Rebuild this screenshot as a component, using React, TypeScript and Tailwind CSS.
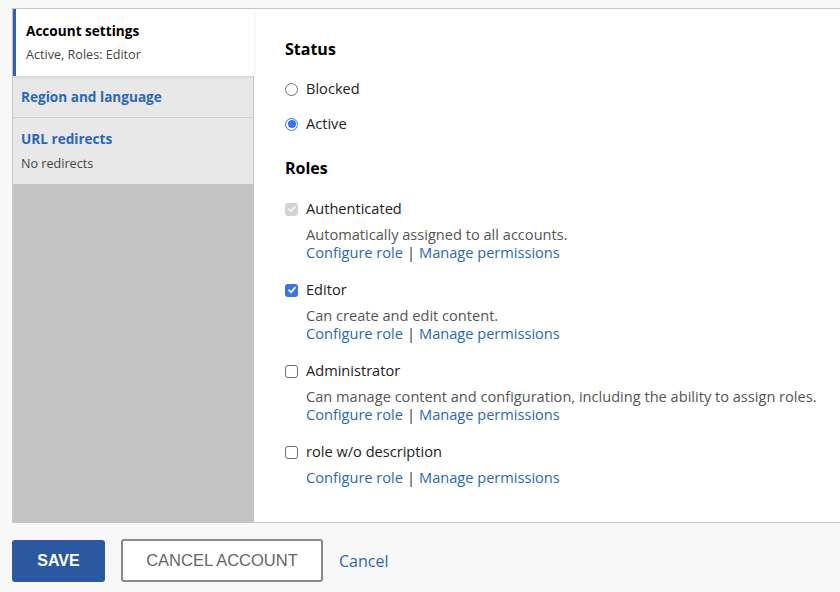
import React from "react";

const linkCls = "text-[#2a67b8]";

function Radio({ checked }: { checked?: boolean }) {
    return checked ? (
        <span className="w-[13px] h-[13px] rounded-full border border-[#3a74ea] bg-white flex items-center justify-center shrink-0">
            <span className="w-[8px] h-[8px] rounded-full bg-[#3a74ea]" />
        </span>
    ) : (
        <span className="w-[13px] h-[13px] rounded-full border border-[#707070] bg-white shrink-0" />
    );
}

function Checkbox({ state }: { state: "on" | "off" | "disabled" }) {
    if (state === "off") {
        return <span className="w-[13px] h-[13px] rounded-[3px] border border-[#707070] bg-white shrink-0" />;
    }
    const bg = state === "on" ? "bg-[#3a74ea]" : "bg-[#d3d3d3]";
    return (
        <span className={`w-[13px] h-[13px] rounded-[3px] ${bg} flex items-center justify-center shrink-0`}>
            <svg width="10" height="10" viewBox="0 0 10 10">
                <path d="M2 5.2 L4.1 7.3 L8 2.6" fill="none" stroke={state === "on" ? "#fff" : "#f2f2f2"} strokeWidth="1.8" strokeLinecap="round" strokeLinejoin="round" />
            </svg>
        </span>
    );
}

function RoleLinks() {
    return (
        <div className="text-[14.6px] leading-[18px]">
            <a className={linkCls}>Configure role</a>
            <span className="text-[#333] mx-[4px]">|</span>
            <a className={linkCls}>Manage permissions</a>
        </div>
    );
}

function Role({ name, desc, state }: { name: string; desc?: string; state: "on" | "off" | "disabled" }) {
    return (
        <div className="mb-[19px]">
            <div className="flex items-center h-[20px]">
                <span className="w-[21px] flex"><Checkbox state={state} /></span>
                <span className="text-[14.6px] text-[#222]">{name}</span>
            </div>
            <div className="pl-[21px] mt-[6px]">
                {desc && <div className="text-[14.6px] leading-[18px] text-[#555]">{desc}</div>}
                <RoleLinks />
            </div>
        </div>
    );
}

export default function App() {
    return (
        <div className="w-[840px] h-[592px] bg-[#f8f8f8] pt-[8px] pl-[12px] overflow-hidden" style={{ fontFamily: "'Open Sans', sans-serif" }}>
            <div className="flex h-[515px] border-t border-l border-b border-[#c8c8c8] bg-white">
                {/* vertical tabs */}
                <div className="w-[241px] shrink-0 flex flex-col bg-[#c4c4c4] border-r border-[#c8c8c8]">
                    <div className="h-[67px] bg-white border-l-[3px] border-[#2f62b0] pl-[10px] pt-[12px] mr-[-1px] relative z-10 shadow-[0_1px_3px_rgba(0,0,0,0.12)]">
                        <div className="text-[13.6px] font-bold text-black leading-[20px]">Account settings</div>
                        <div className="text-[12.6px] text-[#444] leading-[18px] mt-[5px]">Active, Roles: Editor</div>
                    </div>
                    <div className="h-[42px] bg-[#e8e8e8] border-b border-[#cfcfcf] pl-[8px] pt-[2px] flex items-center">
                        <a className="text-[13.6px] font-bold text-[#2a67b8]">Region and language</a>
                    </div>
                    <div className="h-[66px] bg-[#e8e8e8] pl-[8px] pt-[11px]">
                        <a className="text-[13.6px] font-bold text-[#2a67b8] leading-[20px] block">URL redirects</a>
                        <div className="text-[12.6px] text-[#444] leading-[18px] mt-[6px]">No redirects</div>
                    </div>
                </div>
                {/* content */}
                <div className="flex-1 pl-[31px] pt-[28px]">
                    <div className="text-[16px] font-bold text-black leading-[24px]">Status</div>
                    <div className="mt-[18px] flex items-center h-[20px]">
                        <span className="w-[21px] flex"><Radio /></span>
                        <span className="text-[14.6px] text-[#222]">Blocked</span>
                    </div>
                    <div className="mt-[15px] flex items-center h-[20px]">
                        <span className="w-[21px] flex"><Radio checked /></span>
                        <span className="text-[14.6px] text-[#222]">Active</span>
                    </div>
                    <div className="mt-[22px] text-[16px] font-bold text-black leading-[24px]">Roles</div>
                    <div className="mt-[19px]">
                        <Role name="Authenticated" desc="Automatically assigned to all accounts." state="disabled" />
                        <Role name="Editor" desc="Can create and edit content." state="on" />
                        <Role name="Administrator" desc="Can manage content and configuration, including the ability to assign roles." state="off" />
                        <Role name="role w/o description" state="off" />
                    </div>
                </div>
            </div>
            <div className="flex items-center mt-[16px]" style={{ fontFamily: "'Liberation Sans', Arial, sans-serif" }}>
                <button className="w-[93px] h-[42px] rounded-[3px] bg-[#2c58a0] text-white text-[16px] font-semibold">SAVE</button>
                <button className="ml-[16px] w-[202px] h-[43px] rounded-[3px] border-2 border-[#8a8a8d] bg-white text-[#666] text-[16.5px]">CANCEL ACCOUNT</button>
                <a className="ml-[16px] text-[16px] text-[#2a67b8]" style={{ fontFamily: "'Open Sans', sans-serif" }}>Cancel</a>
            </div>
        </div>
    );
}
